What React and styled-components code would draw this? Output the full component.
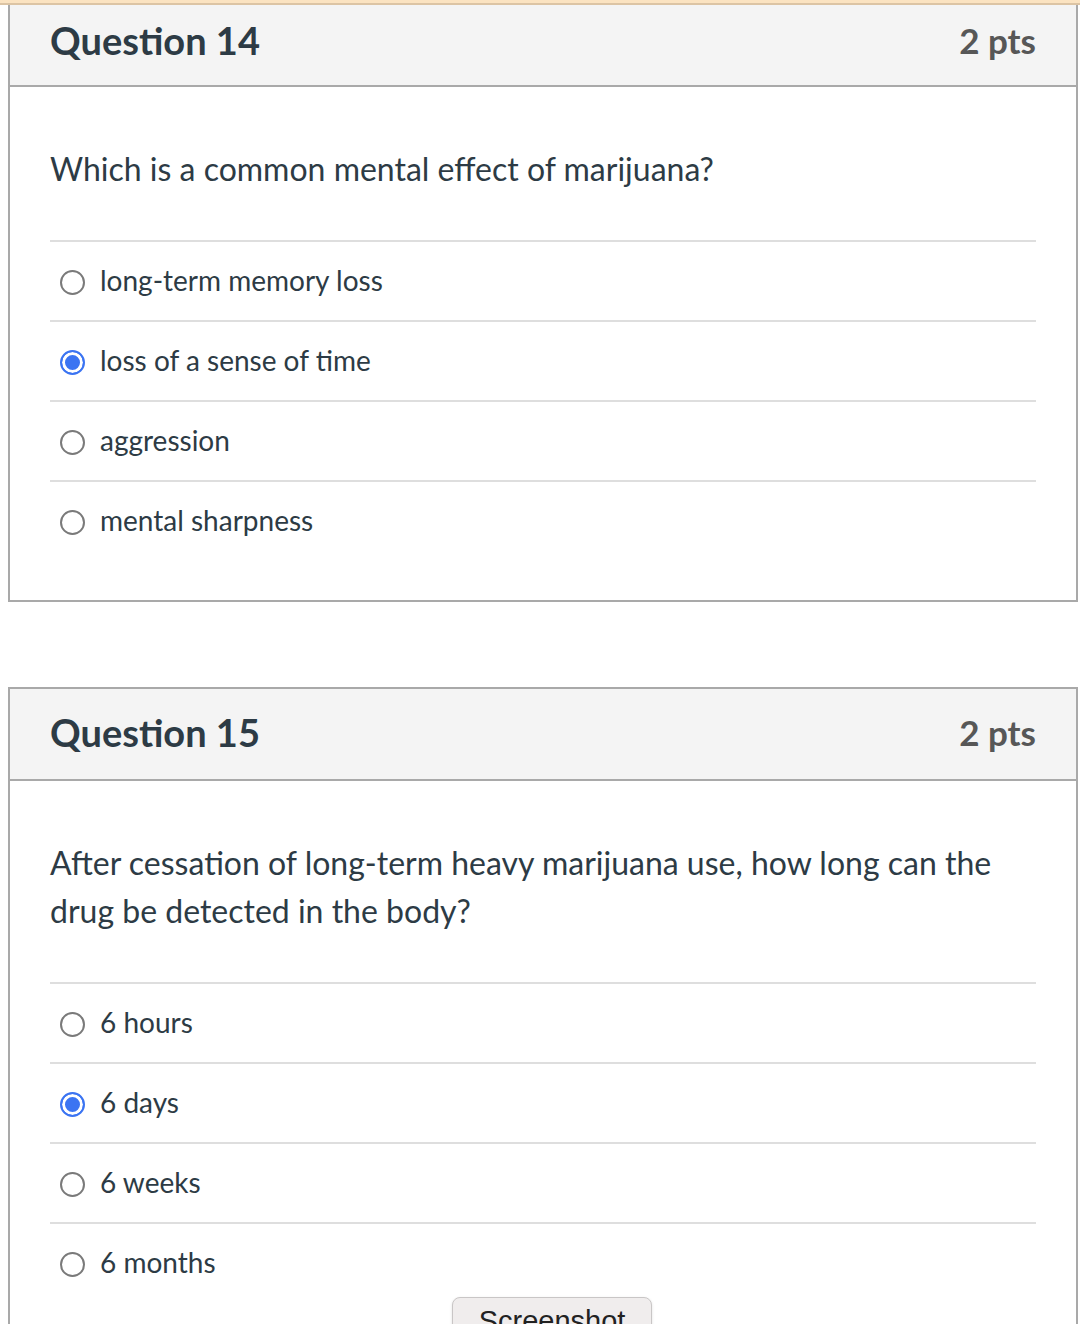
import React from "react";
import styled, { createGlobalStyle } from "styled-components";

const GlobalStyle = createGlobalStyle`
  html, body {
    margin: 0;
    padding: 0;
    background: #ffffff;
    font-family: Lato, "Open Sans", sans-serif;
    overflow: hidden;
  }
`;

const Page = styled.div`
  position: relative;
  width: 1080px;
  height: 1324px;
  overflow: hidden;
  background: #ffffff;
`;

const TopStrip = styled.div`
  height: 3px;
  background: #fbe3c1;
  border-bottom: 2px solid #dcc4a4;
`;

const Card = styled.section`
  margin: ${(p) => (p.$first ? "0" : "85px")} 2px 0 8px;
  border: 2px solid #a9a9a9;
  border-top-width: ${(p) => (p.$first ? "0" : "2px")};
  background: #ffffff;
`;

const Header = styled.header`
  display: flex;
  align-items: center;
  justify-content: space-between;
  height: ${(p) => (p.$first ? "82px" : "92px")};
  padding: ${(p) => (p.$first ? "0 40px 10px 40px" : "0 40px 4px 40px")};
  box-sizing: border-box;
  background: #f4f4f4;
  border-bottom: 2px solid #a9a9a9;
`;

const Title = styled.h2`
  margin: 0;
  font-size: 38px;
  font-weight: 700;
  color: #2d3b45;
`;

const Points = styled.span`
  font-size: 35px;
  font-weight: 700;
  color: #575757;
`;

const Body = styled.div`
  padding: 58px 40px 40px 40px;
`;

const Prompt = styled.p`
  margin: 0 0 47px;
  font-size: 32px;
  line-height: 48px;
  color: #2d3b45;
`;

const OptionList = styled.ul`
  list-style: none;
  margin: 0;
  padding: 0;
`;

const Option = styled.li`
  display: flex;
  align-items: center;
  gap: 15px;
  height: 80px;
  padding: 0 0 3px 10px;
  box-sizing: border-box;
  border-top: 2px solid #dedede;
  font-size: 28px;
  color: #2d3b45;
`;

const Radio = styled.span`
  flex-shrink: 0;
  width: 25px;
  height: 25px;
  box-sizing: border-box;
  border-radius: 50%;
  border: ${(p) => (p.$checked ? "2px solid #3b74f2" : "2px solid #7a7a7a")};
  background: ${(p) => (p.$checked ? "#3b74f2" : "#ffffff")};
  box-shadow: ${(p) => (p.$checked ? "inset 0 0 0 3px #ffffff" : "none")};
  margin-top: 5px;
`;

const ScreenshotButton = styled.div`
  position: absolute;
  left: 452px;
  top: 1297px;
  width: 200px;
  height: 60px;
  box-sizing: border-box;
  border: 1px solid #c9c6c6;
  border-radius: 8px;
  background: #f0eded;
  box-shadow: 0 1px 3px rgba(0, 0, 0, 0.12);
  text-align: center;
  padding-top: 7px;
  font-family: "Liberation Sans", Arial, sans-serif;
  font-size: 29px;
  color: #222222;
`;

const questions = [
  {
    number: 14,
    prompt: "Which is a common mental effect of marijuana?",
    options: [
      "long-term memory loss",
      "loss of a sense of time",
      "aggression",
      "mental sharpness",
    ],
    selected: 1,
  },
  {
    number: 15,
    prompt:
      "After cessation of long-term heavy marijuana use, how long can the drug be detected in the body?",
    options: ["6 hours", "6 days", "6 weeks", "6 months"],
    selected: 1,
  },
];

const App = () => {
  return (
    <Page>
      <GlobalStyle />
      <TopStrip />
      {questions.map((q, i) => (
        <Card key={q.number} $first={i === 0}>
          <Header $first={i === 0}>
            <Title>Question {q.number}</Title>
            <Points>2 pts</Points>
          </Header>
          <Body>
            <Prompt>{q.prompt}</Prompt>
            <OptionList>
              {q.options.map((opt, j) => (
                <Option key={opt}>
                  <Radio $checked={j === q.selected} />
                  {opt}
                </Option>
              ))}
            </OptionList>
          </Body>
        </Card>
      ))}
      <ScreenshotButton>Screenshot</ScreenshotButton>
    </Page>
  );
};

export default App;
